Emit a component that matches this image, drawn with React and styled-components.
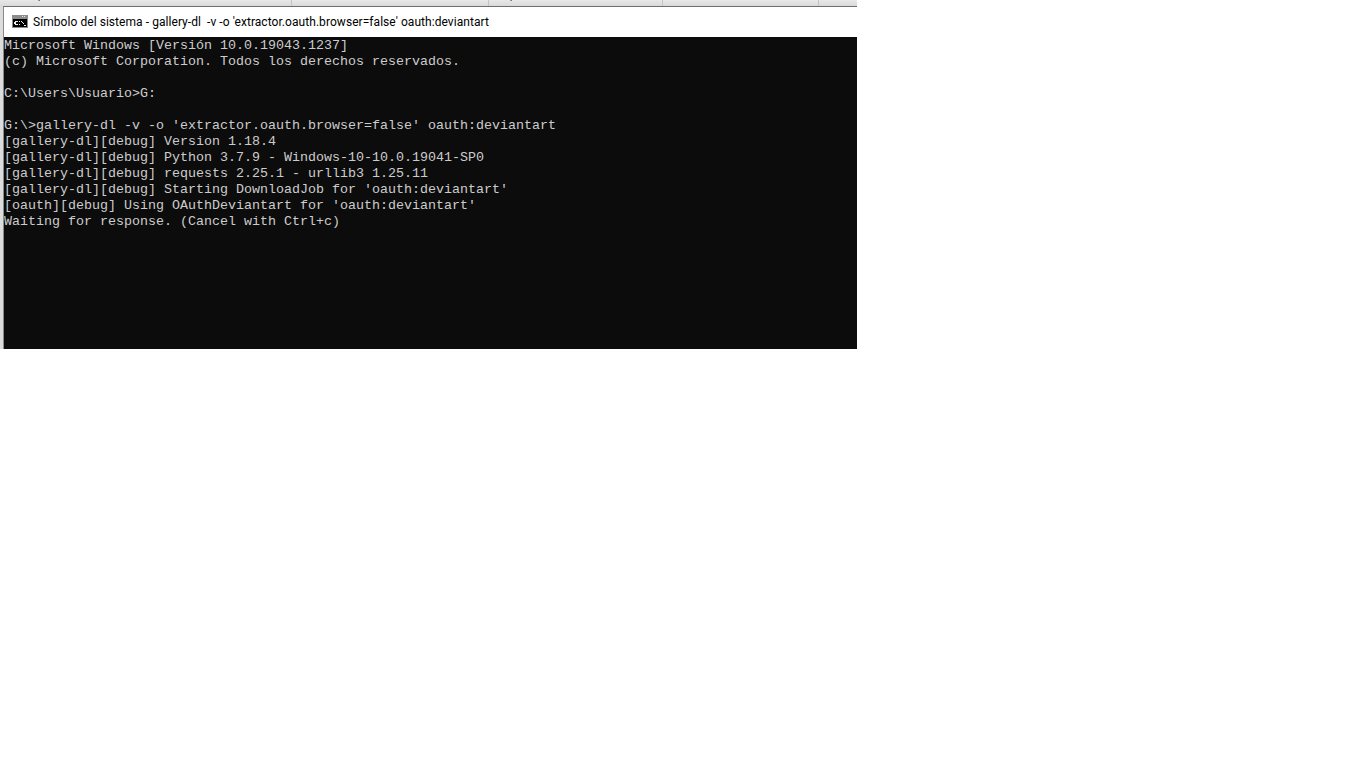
import React from 'react';
import styled, { createGlobalStyle } from 'styled-components';

const GlobalStyle = createGlobalStyle`
  html, body {
    margin: 0;
    padding: 0;
    background: #ffffff;
  }
`;

const Frame = styled.div`
  width: 857px;
  display: flex;
  flex-direction: column;
  background: #dcdcdc;
`;

// Bit of the spreadsheet behind the console window
const BackStrip = styled.div`
  height: 6px;
  display: flex;
  background: linear-gradient(#e8e8e8, #dadada);
`;

const BackCell = styled.div`
  position: relative;
  width: ${(p) => p.$w}px;
  flex: none;
  border-right: 1px solid #c4c4c4;
`;

const Tick = styled.span`
  position: absolute;
  top: 0;
  left: ${(p) => p.$x}px;
  width: 2px;
  height: 1px;
  background: linear-gradient(90deg, #b98a8a 50%, #6f78b8 50%);
`;

const Window = styled.div`
  display: flex;
  flex-direction: column;
  margin-left: 3px;
  border-top: 1px solid #6d6d6d;
  border-left: 1px solid #8a8a8a;
`;

const TitleBar = styled.div`
  height: 30px;
  display: flex;
  align-items: center;
  background: #ffffff;
  padding: 0 0 2px 8px;
  box-sizing: border-box;
  gap: 5px;
`;

const Title = styled.span`
  padding-top: 2px;
  font-family: Roboto, sans-serif;
  font-size: 12px;
  letter-spacing: 0.057px;
  color: #000000;
  white-space: pre;
`;

const Console = styled.pre`
  margin: 0;
  box-sizing: border-box;
  height: 312px;
  padding-top: 1px;
  background: #0c0c0c;
  color: #cccccc;
  font-family: 'Liberation Mono', monospace;
  font-size: 13.33px;
  line-height: 16px;
  white-space: pre;
  overflow: hidden;
`;

const lines = [
  'Microsoft Windows [Versión 10.0.19043.1237]',
  '(c) Microsoft Corporation. Todos los derechos reservados.',
  '',
  'C:\\Users\\Usuario>G:',
  '',
  "G:\\>gallery-dl -v -o 'extractor.oauth.browser=false' oauth:deviantart",
  '[gallery-dl][debug] Version 1.18.4',
  '[gallery-dl][debug] Python 3.7.9 - Windows-10-10.0.19041-SP0',
  '[gallery-dl][debug] requests 2.25.1 - urllib3 1.25.11',
  "[gallery-dl][debug] Starting DownloadJob for 'oauth:deviantart'",
  "[oauth][debug] Using OAuthDeviantart for 'oauth:deviantart'",
  'Waiting for response. (Cancel with Ctrl+c)',
];

function CmdIcon() {
  return (
    <svg width="16" height="16" viewBox="0 0 16 16" shapeRendering="crispEdges">
      <rect x="0" y="2" width="16" height="13" fill="#8c8c8c" />
      <rect x="1" y="6" width="14" height="8" fill="#000000" />
      <rect x="10" y="3" width="1" height="1" fill="#e8e8e8" />
      <rect x="12" y="3" width="1" height="1" fill="#e8e8e8" />
      <path d="M3 8h3v1H3zM2 9h2v2H2zM3 11h3v1H3zM7 8h1v1H7zM7 11h1v1H7zM9 8h1v1H9zM10 9h1v1h-1zM11 10h1v1h-1zM12 12h2v1h-2z" fill="#f0f0f0" />
    </svg>
  );
}

export default function App() {
  return (
    <Frame>
      <GlobalStyle />
      <BackStrip>
        <BackCell $w={291}>
          <Tick $x={38} />
        </BackCell>
        <BackCell $w={196}>
          <Tick $x={218} />
        </BackCell>
        <BackCell $w={173} />
        <BackCell $w={155} />
      </BackStrip>
      <Window>
        <TitleBar>
          <CmdIcon />
          <Title>{"Símbolo del sistema - gallery-dl  -v -o 'extractor.oauth.browser=false' oauth:deviantart"}</Title>
        </TitleBar>
        <Console>{lines.join('\n')}</Console>
      </Window>
    </Frame>
  );
}
